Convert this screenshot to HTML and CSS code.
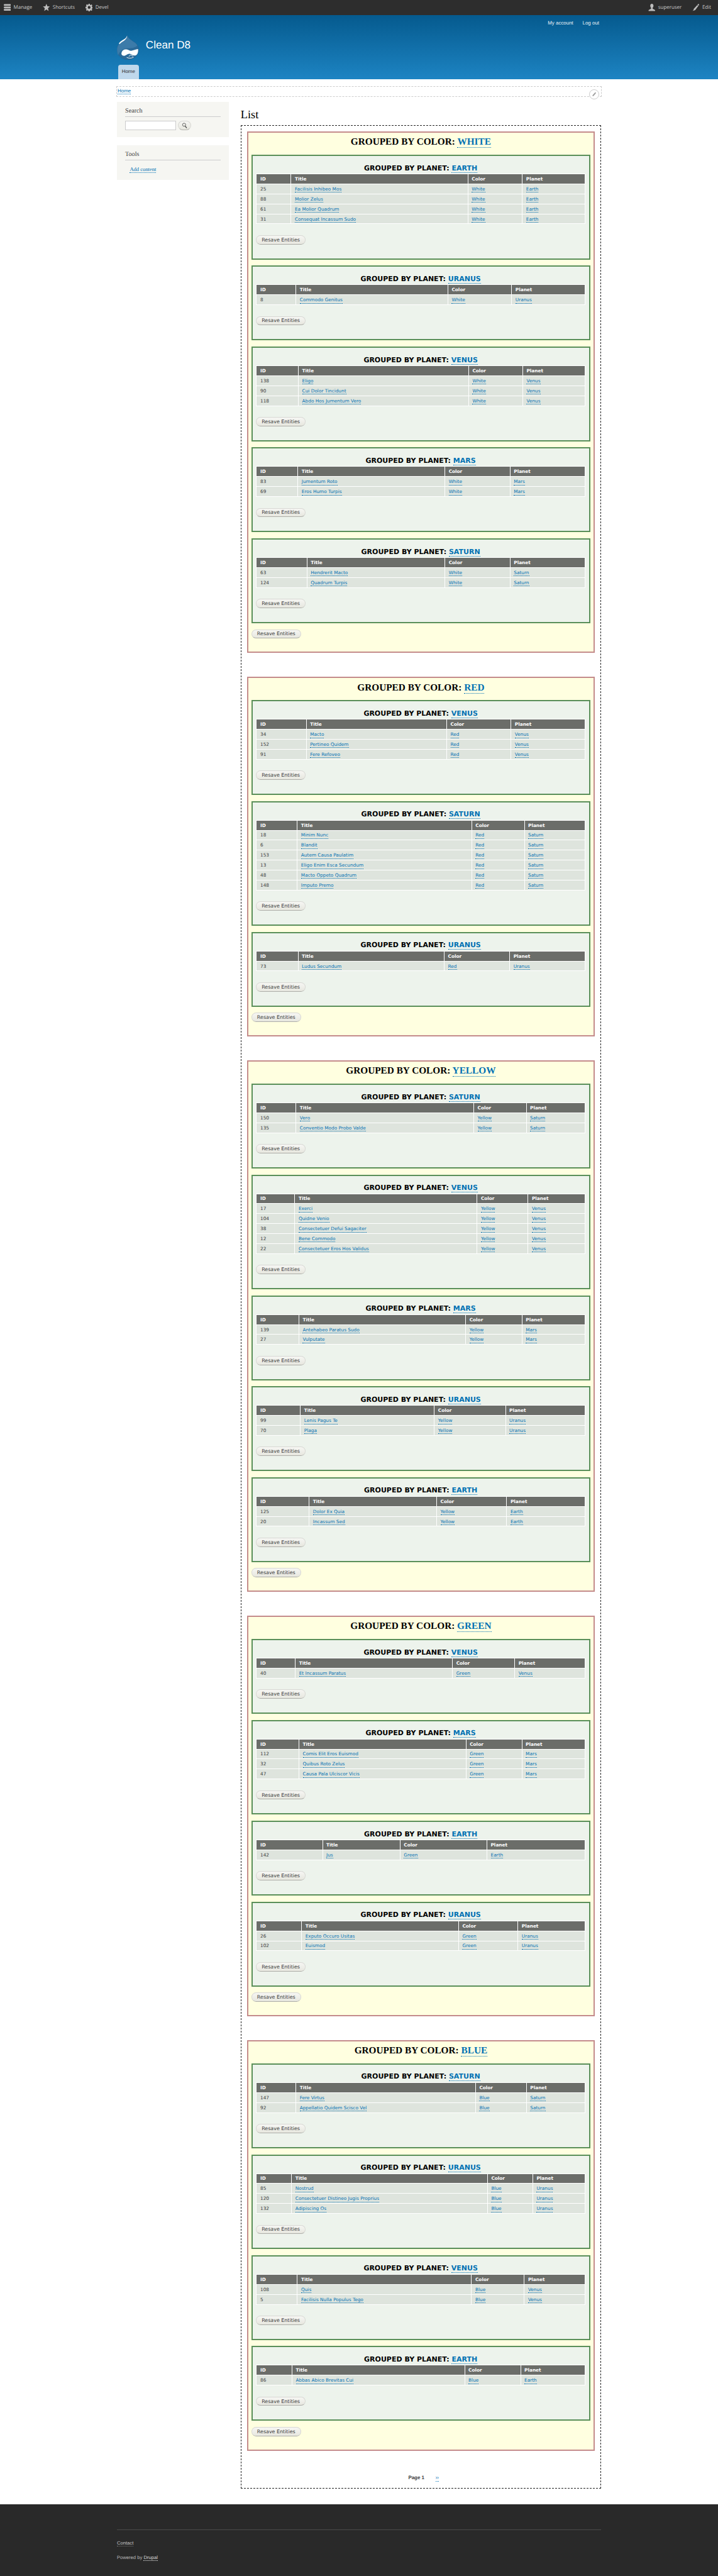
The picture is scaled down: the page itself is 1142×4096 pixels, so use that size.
FILE: index.html
```html
<!DOCTYPE html>
<html lang="en">
<head>
<meta charset="utf-8">
<title>List | Clean D8</title>
<link rel="stylesheet" href="styles.css">
</head>
<body>
<nav class="toolbar">
  <div class="tb-group">
    <a class="tb-item" href="#"><svg class="tb-icon" viewBox="0 0 20 20"><rect x="0" y="1" width="20" height="4.6" rx="2.2"/><rect x="0" y="7.7" width="20" height="4.6" rx="2.2"/><rect x="0" y="14.4" width="20" height="4.6" rx="2.2"/></svg>Manage</a>
    <a class="tb-item" href="#"><svg class="tb-icon" viewBox="0 0 20 20"><path d="M10 0l2.7 6.8 6.8.5-5.2 4.7 1.7 8L10 15.700l-6 4.300 1.700-8L.5 7.300l6.800-.5z"/></svg>Shortcuts</a>
    <a class="tb-item" href="#"><svg class="tb-icon" viewBox="0 0 20 20"><path fill-rule="evenodd" d="M8.200 0h3.600l.5 2.900 1.600.7 2.400-1.700 2.500 2.500-1.700 2.400.7 1.600 2.900.5v3.600l-2.900.5-.7 1.600 1.700 2.400-2.500 2.500-2.400-1.700-1.600.7-.5 2.900H8.200l-.5-2.900-1.600-.7-2.400 1.700-2.500-2.500 1.700-2.400-.7-1.600-2.900-.5V8.400l2.900-.5.7-1.600L1.400 3.900l2.500-2.500 2.400 1.700 1.600-.7zM10 6.200a3.800 3.800 0 1 0 0 7.600 3.800 3.800 0 0 0 0-7.600z"/></svg>Devel</a>
  </div>
  <div class="tb-group">
    <a class="tb-item" href="#"><svg class="tb-icon" viewBox="0 0 20 20"><path d="M10 0c2.900 0 4.400 2.300 4.400 5.200 0 2.500-1 4.600-2.200 5.800-.4 1.500.1 3 2 3.800 2 .8 3.800 1.500 4.800 2.700V20H1v-2.500c1-1.200 2.800-1.900 4.800-2.700 1.900-.8 2.400-2.300 2-3.800C6.600 9.800 5.600 7.700 5.600 5.200 5.600 2.300 7.100 0 10 0z"/></svg>superuser</a>
    <a class="tb-item" href="#"><svg class="tb-icon" viewBox="0 0 20 20"><path d="M16.800 0l2.400 1.900-1.700 3.100-3.200-2zM13.600 3.700l3.300 2L8.200 17.200l-4.600 1.600.4-4.700zM2.800 17.200l1.300.8L1 20z"/></svg>Edit</a>
  </div>
</nav>

<header class="site-header">
  <div class="container">
    <ul class="secondary-menu">
      <li><a href="#">My account</a></li>
      <li><a href="#">Log out</a></li>
    </ul>
    <div class="branding">
      <svg class="logo" viewBox="0 0 57 64">
        <path fill="#2b6a99" stroke="#2a5f8a" stroke-width=".8" d="M27 .5c1 7 10 12 19 18 7 5 10.500 12 10.500 19.500C56.500 52.500 44 63.500 28.500 63.500S.5 52 .5 37.500C.5 25 9 18.500 17 13c5-3.500 9-7 10-12.500z"/>
        <path fill="#3c7ba9" d="M27 1c1 7 10 12 19 18 3 2.200 5.500 5 7.200 8C40 38 28 30 14 38c-6 3.500-9 9-11 14-1.600-4-2.500-9-2.500-14.500C.5 25 9 18.500 17 13c5-3.500 9-7 10-12z"/>
        <path fill="#fff" d="M26.500 1c-.2 5-2 9.500-8 13.500-3.500 2.300-6.500 4.200-11 7.800C5 24 4 21 8 17.500 15 12 24 10 26.500 1z"/>
        <path fill="#fff" d="M12 47c0-7 7-11.500 13.500-10 4.500 1 8 4.500 12 3.500 6-1.500 12-4 17.500-4.500 1 8.500-1.500 17-9.500 17-6 0-8.500-4.500-13.500-4.500-5 0-8 5-13 5-4.500 0-7.500-2.500-7.500-6.500z"/>
        <path fill="none" stroke="#fff" stroke-width="1.500" stroke-linecap="round" d="M26 58c5 2.500 11 2.500 17-.5M31.500 55c1-4 8-5 9.500 0"/>
      </svg>
      <a class="site-name" href="#">Clean D8</a>
    </div>
    <nav class="main-menu"><a class="tab" href="#">Home</a></nav>
  </div>
</header>

<div class="container">
  <div class="breadcrumb">
    <a href="#">Home</a>
    <button class="contextual" type="button" aria-label="Edit"><svg viewBox="0 0 20 20"><path d="M14.500 2l3.500 2.500L8 16.500 3.800 18l.5-4.500z"/></svg></button>
  </div>

  <div class="layout">
    <aside class="sidebar">
      <section class="block">
        <h2 class="block-title">Search</h2>
        <form class="search-form">
          <input class="search-input" type="search">
          <button class="search-btn" type="button" aria-label="Search"><svg viewBox="0 0 20 20"><circle cx="8" cy="7" r="5.200"/><path d="M11.500 11l5 7" stroke-width="2.600"/></svg></button>
        </form>
      </section>
      <section class="block">
        <h2 class="block-title">Tools</h2>
        <div class="tools-link"><a href="#">Add content</a></div>
      </section>
    </aside>

    <main class="main">
      <h1 class="page-title">List</h1>
      <div class="view">

        <section class="color-group">
          <h2 class="color-title">Grouped by color: <a href="#">White</a></h2>
          <section class="planet-group">
            <h3 class="planet-title">Grouped by planet: <a href="#">Earth</a></h3>
            <table class="entities">
              <thead><tr><th>ID</th><th>Title</th><th>Color</th><th>Planet</th></tr></thead>
              <tbody>
                <tr><td>25</td><td><a href="#">Facilisis Inhibeo Mos</a></td><td><a href="#">White</a></td><td><a href="#">Earth</a></td></tr>
                <tr><td>88</td><td><a href="#">Molior Zelus</a></td><td><a href="#">White</a></td><td><a href="#">Earth</a></td></tr>
                <tr><td>61</td><td><a href="#">Ea Molior Quadrum</a></td><td><a href="#">White</a></td><td><a href="#">Earth</a></td></tr>
                <tr><td>31</td><td><a href="#">Consequat Incassum Sudo</a></td><td><a href="#">White</a></td><td><a href="#">Earth</a></td></tr>
              </tbody>
            </table>
            <button class="btn" type="button">Resave Entities</button>
          </section>
          <section class="planet-group">
            <h3 class="planet-title">Grouped by planet: <a href="#">Uranus</a></h3>
            <table class="entities">
              <thead><tr><th>ID</th><th>Title</th><th>Color</th><th>Planet</th></tr></thead>
              <tbody>
                <tr><td>8</td><td><a href="#">Commodo Genitus</a></td><td><a href="#">White</a></td><td><a href="#">Uranus</a></td></tr>
              </tbody>
            </table>
            <button class="btn" type="button">Resave Entities</button>
          </section>
          <section class="planet-group">
            <h3 class="planet-title">Grouped by planet: <a href="#">Venus</a></h3>
            <table class="entities">
              <thead><tr><th>ID</th><th>Title</th><th>Color</th><th>Planet</th></tr></thead>
              <tbody>
                <tr><td>138</td><td><a href="#">Eligo</a></td><td><a href="#">White</a></td><td><a href="#">Venus</a></td></tr>
                <tr><td>90</td><td><a href="#">Cui Dolor Tincidunt</a></td><td><a href="#">White</a></td><td><a href="#">Venus</a></td></tr>
                <tr><td>118</td><td><a href="#">Abdo Hos Jumentum Vero</a></td><td><a href="#">White</a></td><td><a href="#">Venus</a></td></tr>
              </tbody>
            </table>
            <button class="btn" type="button">Resave Entities</button>
          </section>
          <section class="planet-group">
            <h3 class="planet-title">Grouped by planet: <a href="#">Mars</a></h3>
            <table class="entities">
              <thead><tr><th>ID</th><th>Title</th><th>Color</th><th>Planet</th></tr></thead>
              <tbody>
                <tr><td>83</td><td><a href="#">Jumentum Roto</a></td><td><a href="#">White</a></td><td><a href="#">Mars</a></td></tr>
                <tr><td>69</td><td><a href="#">Eros Humo Turpis</a></td><td><a href="#">White</a></td><td><a href="#">Mars</a></td></tr>
              </tbody>
            </table>
            <button class="btn" type="button">Resave Entities</button>
          </section>
          <section class="planet-group">
            <h3 class="planet-title">Grouped by planet: <a href="#">Saturn</a></h3>
            <table class="entities">
              <thead><tr><th>ID</th><th>Title</th><th>Color</th><th>Planet</th></tr></thead>
              <tbody>
                <tr><td>63</td><td><a href="#">Hendrerit Macto</a></td><td><a href="#">White</a></td><td><a href="#">Saturn</a></td></tr>
                <tr><td>124</td><td><a href="#">Quadrum Turpis</a></td><td><a href="#">White</a></td><td><a href="#">Saturn</a></td></tr>
              </tbody>
            </table>
            <button class="btn" type="button">Resave Entities</button>
          </section>
          <button class="btn btn-group" type="button">Resave Entities</button>
        </section>

        <section class="color-group">
          <h2 class="color-title">Grouped by color: <a href="#">Red</a></h2>
          <section class="planet-group">
            <h3 class="planet-title">Grouped by planet: <a href="#">Venus</a></h3>
            <table class="entities">
              <thead><tr><th>ID</th><th>Title</th><th>Color</th><th>Planet</th></tr></thead>
              <tbody>
                <tr><td>34</td><td><a href="#">Macto</a></td><td><a href="#">Red</a></td><td><a href="#">Venus</a></td></tr>
                <tr><td>152</td><td><a href="#">Pertineo Quidem</a></td><td><a href="#">Red</a></td><td><a href="#">Venus</a></td></tr>
                <tr><td>91</td><td><a href="#">Fere Refoveo</a></td><td><a href="#">Red</a></td><td><a href="#">Venus</a></td></tr>
              </tbody>
            </table>
            <button class="btn" type="button">Resave Entities</button>
          </section>
          <section class="planet-group">
            <h3 class="planet-title">Grouped by planet: <a href="#">Saturn</a></h3>
            <table class="entities">
              <thead><tr><th>ID</th><th>Title</th><th>Color</th><th>Planet</th></tr></thead>
              <tbody>
                <tr><td>18</td><td><a href="#">Minim Nunc</a></td><td><a href="#">Red</a></td><td><a href="#">Saturn</a></td></tr>
                <tr><td>6</td><td><a href="#">Blandit</a></td><td><a href="#">Red</a></td><td><a href="#">Saturn</a></td></tr>
                <tr><td>153</td><td><a href="#">Autem Causa Paulatim</a></td><td><a href="#">Red</a></td><td><a href="#">Saturn</a></td></tr>
                <tr><td>13</td><td><a href="#">Eligo Enim Esca Secundum</a></td><td><a href="#">Red</a></td><td><a href="#">Saturn</a></td></tr>
                <tr><td>48</td><td><a href="#">Macto Oppeto Quadrum</a></td><td><a href="#">Red</a></td><td><a href="#">Saturn</a></td></tr>
                <tr><td>148</td><td><a href="#">Imputo Premo</a></td><td><a href="#">Red</a></td><td><a href="#">Saturn</a></td></tr>
              </tbody>
            </table>
            <button class="btn" type="button">Resave Entities</button>
          </section>
          <section class="planet-group">
            <h3 class="planet-title">Grouped by planet: <a href="#">Uranus</a></h3>
            <table class="entities">
              <thead><tr><th>ID</th><th>Title</th><th>Color</th><th>Planet</th></tr></thead>
              <tbody>
                <tr><td>73</td><td><a href="#">Ludus Secundum</a></td><td><a href="#">Red</a></td><td><a href="#">Uranus</a></td></tr>
              </tbody>
            </table>
            <button class="btn" type="button">Resave Entities</button>
          </section>
          <button class="btn btn-group" type="button">Resave Entities</button>
        </section>

        <section class="color-group">
          <h2 class="color-title">Grouped by color: <a href="#">Yellow</a></h2>
          <section class="planet-group">
            <h3 class="planet-title">Grouped by planet: <a href="#">Saturn</a></h3>
            <table class="entities">
              <thead><tr><th>ID</th><th>Title</th><th>Color</th><th>Planet</th></tr></thead>
              <tbody>
                <tr><td>150</td><td><a href="#">Vero</a></td><td><a href="#">Yellow</a></td><td><a href="#">Saturn</a></td></tr>
                <tr><td>135</td><td><a href="#">Conventio Modo Probo Valde</a></td><td><a href="#">Yellow</a></td><td><a href="#">Saturn</a></td></tr>
              </tbody>
            </table>
            <button class="btn" type="button">Resave Entities</button>
          </section>
          <section class="planet-group">
            <h3 class="planet-title">Grouped by planet: <a href="#">Venus</a></h3>
            <table class="entities">
              <thead><tr><th>ID</th><th>Title</th><th>Color</th><th>Planet</th></tr></thead>
              <tbody>
                <tr><td>17</td><td><a href="#">Exerci</a></td><td><a href="#">Yellow</a></td><td><a href="#">Venus</a></td></tr>
                <tr><td>104</td><td><a href="#">Quidne Venio</a></td><td><a href="#">Yellow</a></td><td><a href="#">Venus</a></td></tr>
                <tr><td>38</td><td><a href="#">Consectetuer Defui Sagaciter</a></td><td><a href="#">Yellow</a></td><td><a href="#">Venus</a></td></tr>
                <tr><td>12</td><td><a href="#">Bene Commodo</a></td><td><a href="#">Yellow</a></td><td><a href="#">Venus</a></td></tr>
                <tr><td>22</td><td><a href="#">Consectetuer Eros Hos Validus</a></td><td><a href="#">Yellow</a></td><td><a href="#">Venus</a></td></tr>
              </tbody>
            </table>
            <button class="btn" type="button">Resave Entities</button>
          </section>
          <section class="planet-group">
            <h3 class="planet-title">Grouped by planet: <a href="#">Mars</a></h3>
            <table class="entities">
              <thead><tr><th>ID</th><th>Title</th><th>Color</th><th>Planet</th></tr></thead>
              <tbody>
                <tr><td>139</td><td><a href="#">Antehabeo Paratus Sudo</a></td><td><a href="#">Yellow</a></td><td><a href="#">Mars</a></td></tr>
                <tr><td>27</td><td><a href="#">Vulputate</a></td><td><a href="#">Yellow</a></td><td><a href="#">Mars</a></td></tr>
              </tbody>
            </table>
            <button class="btn" type="button">Resave Entities</button>
          </section>
          <section class="planet-group">
            <h3 class="planet-title">Grouped by planet: <a href="#">Uranus</a></h3>
            <table class="entities">
              <thead><tr><th>ID</th><th>Title</th><th>Color</th><th>Planet</th></tr></thead>
              <tbody>
                <tr><td>99</td><td><a href="#">Lenis Pagus Te</a></td><td><a href="#">Yellow</a></td><td><a href="#">Uranus</a></td></tr>
                <tr><td>70</td><td><a href="#">Plaga</a></td><td><a href="#">Yellow</a></td><td><a href="#">Uranus</a></td></tr>
              </tbody>
            </table>
            <button class="btn" type="button">Resave Entities</button>
          </section>
          <section class="planet-group">
            <h3 class="planet-title">Grouped by planet: <a href="#">Earth</a></h3>
            <table class="entities">
              <thead><tr><th>ID</th><th>Title</th><th>Color</th><th>Planet</th></tr></thead>
              <tbody>
                <tr><td>125</td><td><a href="#">Dolor Ex Quia</a></td><td><a href="#">Yellow</a></td><td><a href="#">Earth</a></td></tr>
                <tr><td>20</td><td><a href="#">Incassum Sed</a></td><td><a href="#">Yellow</a></td><td><a href="#">Earth</a></td></tr>
              </tbody>
            </table>
            <button class="btn" type="button">Resave Entities</button>
          </section>
          <button class="btn btn-group" type="button">Resave Entities</button>
        </section>

        <section class="color-group">
          <h2 class="color-title">Grouped by color: <a href="#">Green</a></h2>
          <section class="planet-group">
            <h3 class="planet-title">Grouped by planet: <a href="#">Venus</a></h3>
            <table class="entities">
              <thead><tr><th>ID</th><th>Title</th><th>Color</th><th>Planet</th></tr></thead>
              <tbody>
                <tr><td>40</td><td><a href="#">Et Incassum Paratus</a></td><td><a href="#">Green</a></td><td><a href="#">Venus</a></td></tr>
              </tbody>
            </table>
            <button class="btn" type="button">Resave Entities</button>
          </section>
          <section class="planet-group">
            <h3 class="planet-title">Grouped by planet: <a href="#">Mars</a></h3>
            <table class="entities">
              <thead><tr><th>ID</th><th>Title</th><th>Color</th><th>Planet</th></tr></thead>
              <tbody>
                <tr><td>112</td><td><a href="#">Comis Elit Eros Euismod</a></td><td><a href="#">Green</a></td><td><a href="#">Mars</a></td></tr>
                <tr><td>32</td><td><a href="#">Quibus Roto Zelus</a></td><td><a href="#">Green</a></td><td><a href="#">Mars</a></td></tr>
                <tr><td>47</td><td><a href="#">Causa Pala Ulciscor Vicis</a></td><td><a href="#">Green</a></td><td><a href="#">Mars</a></td></tr>
              </tbody>
            </table>
            <button class="btn" type="button">Resave Entities</button>
          </section>
          <section class="planet-group">
            <h3 class="planet-title">Grouped by planet: <a href="#">Earth</a></h3>
            <table class="entities">
              <thead><tr><th>ID</th><th>Title</th><th>Color</th><th>Planet</th></tr></thead>
              <tbody>
                <tr><td>142</td><td><a href="#">Jus</a></td><td><a href="#">Green</a></td><td><a href="#">Earth</a></td></tr>
              </tbody>
            </table>
            <button class="btn" type="button">Resave Entities</button>
          </section>
          <section class="planet-group">
            <h3 class="planet-title">Grouped by planet: <a href="#">Uranus</a></h3>
            <table class="entities">
              <thead><tr><th>ID</th><th>Title</th><th>Color</th><th>Planet</th></tr></thead>
              <tbody>
                <tr><td>26</td><td><a href="#">Exputo Occuro Usitas</a></td><td><a href="#">Green</a></td><td><a href="#">Uranus</a></td></tr>
                <tr><td>102</td><td><a href="#">Euismod</a></td><td><a href="#">Green</a></td><td><a href="#">Uranus</a></td></tr>
              </tbody>
            </table>
            <button class="btn" type="button">Resave Entities</button>
          </section>
          <button class="btn btn-group" type="button">Resave Entities</button>
        </section>

        <section class="color-group">
          <h2 class="color-title">Grouped by color: <a href="#">Blue</a></h2>
          <section class="planet-group">
            <h3 class="planet-title">Grouped by planet: <a href="#">Saturn</a></h3>
            <table class="entities">
              <thead><tr><th>ID</th><th>Title</th><th>Color</th><th>Planet</th></tr></thead>
              <tbody>
                <tr><td>147</td><td><a href="#">Fere Virtus</a></td><td><a href="#">Blue</a></td><td><a href="#">Saturn</a></td></tr>
                <tr><td>92</td><td><a href="#">Appellatio Quidem Scisco Vel</a></td><td><a href="#">Blue</a></td><td><a href="#">Saturn</a></td></tr>
              </tbody>
            </table>
            <button class="btn" type="button">Resave Entities</button>
          </section>
          <section class="planet-group">
            <h3 class="planet-title">Grouped by planet: <a href="#">Uranus</a></h3>
            <table class="entities">
              <thead><tr><th>ID</th><th>Title</th><th>Color</th><th>Planet</th></tr></thead>
              <tbody>
                <tr><td>85</td><td><a href="#">Nostrud</a></td><td><a href="#">Blue</a></td><td><a href="#">Uranus</a></td></tr>
                <tr><td>120</td><td><a href="#">Consectetuer Distineo Jugis Proprius</a></td><td><a href="#">Blue</a></td><td><a href="#">Uranus</a></td></tr>
                <tr><td>132</td><td><a href="#">Adipiscing Os</a></td><td><a href="#">Blue</a></td><td><a href="#">Uranus</a></td></tr>
              </tbody>
            </table>
            <button class="btn" type="button">Resave Entities</button>
          </section>
          <section class="planet-group">
            <h3 class="planet-title">Grouped by planet: <a href="#">Venus</a></h3>
            <table class="entities">
              <thead><tr><th>ID</th><th>Title</th><th>Color</th><th>Planet</th></tr></thead>
              <tbody>
                <tr><td>108</td><td><a href="#">Quis</a></td><td><a href="#">Blue</a></td><td><a href="#">Venus</a></td></tr>
                <tr><td>5</td><td><a href="#">Facilisis Nulla Populus Tego</a></td><td><a href="#">Blue</a></td><td><a href="#">Venus</a></td></tr>
              </tbody>
            </table>
            <button class="btn" type="button">Resave Entities</button>
          </section>
          <section class="planet-group">
            <h3 class="planet-title">Grouped by planet: <a href="#">Earth</a></h3>
            <table class="entities">
              <thead><tr><th>ID</th><th>Title</th><th>Color</th><th>Planet</th></tr></thead>
              <tbody>
                <tr><td>86</td><td><a href="#">Abbas Abico Brevitas Cui</a></td><td><a href="#">Blue</a></td><td><a href="#">Earth</a></td></tr>
              </tbody>
            </table>
            <button class="btn" type="button">Resave Entities</button>
          </section>
          <button class="btn btn-group" type="button">Resave Entities</button>
        </section>

        <nav class="pager">
          <span class="pager-current">Page 1</span>
          <a class="pager-next" href="#">››</a>
        </nav>
      </div>
    </main>
  </div>
</div>

<footer class="site-footer">
  <div class="container">
    <div class="footer-inner">
      <p class="footer-menu"><a href="#">Contact</a></p>
      <p class="footer-powered">Powered by <a href="#">Drupal</a></p>
    </div>
  </div>
</footer>
</body>
</html>
```

FILE: styles.css
```css
* { box-sizing: border-box; }

html { background: #292929; }

body {
  margin: 0;
  background: #fff;
  color: #3b3b3b;
  font-family: "Liberation Sans", Arial, sans-serif;
  font-size: 7.94px;
  text-rendering: geometricPrecision;
}

a { color: #0071b3; text-decoration: none; }

.container { width: 770px; margin: 0 auto; }

/* Admin toolbar */
.toolbar {
  display: flex;
  justify-content: space-between;
  height: 23.83px;
  padding: 0 11px 0 5.5px;
  background: #2d2d2d;
  font-family: "Open Sans", sans-serif;
  font-size: 7.94px;
}
.tb-group { display: flex; gap: 16.5px; }
.tb-item { display: flex; align-items: center; gap: 4.5px; color: #c8c8c8; }
.tb-icon { width: 11.6px; height: 11.6px; fill: #bdbdbd; }

/* Site header */
.site-header {
  height: 102px;
  background: linear-gradient(#055a8e, #1d84c3);
}
.secondary-menu {
  display: flex;
  justify-content: flex-end;
  gap: 14.7px;
  margin: 0;
  padding: 6.7px 3px 0 0;
  list-style: none;
  line-height: 11px;
}
.secondary-menu a { color: #e8f1f7; }
.branding { display: flex; gap: 11px; margin-top: 14px; height: 39.1px; }
.logo { width: 34.8px; height: 39.1px; }
.site-name {
  padding-top: 6.7px;
  color: #fff;
  font-size: 17.1px;
  line-height: 19.6px;
}
.main-menu { display: flex; margin: 8.55px 0 0 1.5px; }
.tab {
  display: block;
  width: 33.6px;
  height: 22.6px;
  border-radius: 3.7px 3.7px 0 0;
  background: #bfd8ec;
  color: #333;
  line-height: 22.6px;
  text-align: center;
}

/* Breadcrumb */
.breadcrumb {
  position: relative;
  height: 17.1px;
  margin: 11px -1px 0;
  padding-left: 1px;
  border: 1px dashed #ccc;
  line-height: 13.4px;
}
.breadcrumb a { border-bottom: 1px dotted #0071b3; }
.contextual {
  position: absolute;
  top: 4.3px;
  right: 3px;
  width: 15.9px;
  height: 15.9px;
  padding: 3px;
  border: 1px solid #ccc;
  border-radius: 50%;
  background: #fff;
}
.contextual svg { display: block; fill: #9a9a9a; }

/* Two columns */
.layout { display: flex; gap: 19px; margin-top: 7.9px; }
.sidebar { flex: none; width: 177.8px; padding-left: .3px; }
.main { flex: 1; min-width: 0; }

.block {
  margin-bottom: 12.2px;
  padding: 7.3px 12.8px 11px;
  background: #f6f6f2;
}
.block-title {
  margin: 0;
  border-bottom: 1px solid #ccc;
  color: #3b3b3b;
  font-family: "Liberation Serif", serif;
  font-size: 10.1px;
  font-weight: 400;
  line-height: 15.9px;
}
.search-form { display: flex; gap: 3px; margin: 0; padding-top: 5.5px; }
.search-input {
  width: 81.3px;
  height: 15.9px;
  padding: 0;
  border: 1px solid #ccc;
  background: #fff;
}
.search-btn {
  width: 20.2px;
  height: 15.9px;
  padding: 1.8px 4.3px;
  border: 1px solid #d8d8d4;
  border-bottom-color: #b5b5b0;
  border-radius: 8px;
  background: linear-gradient(#f6f6f3, #e7e7df);
}
.search-btn svg { display: block; fill: none; stroke: #3b3b3b; stroke-width: 1.6; }
.tools-link {
  padding: 7.9px 0 0 7.3px;
  font-family: "Liberation Serif", serif;
  font-size: 8.55px;
  line-height: 12.2px;
}
.tools-link a { border-bottom: 1px dotted #0071b3; }

/* View */
.page-title {
  margin: 0;
  padding-top: 9.2px;
  color: #000;
  font-family: "Liberation Serif", serif;
  font-size: 18.3px;
  font-weight: 400;
  line-height: 22px;
}
.view {
  margin-top: 6.1px;
  padding: 8.8px 8.8px 0;
  border: 1px dashed #222;
}
.color-group {
  margin-bottom: 37.6px;
  padding: 3.5px 5.3px 21.2px;
  border: 2px solid #c48b8b;
  background: #ffffe0;
}
.color-group:last-of-type { margin-bottom: 0; }
.color-title {
  margin: 0 0 7.3px;
  color: #000;
  font-family: "Liberation Serif", serif;
  font-size: 15.3px;
  font-weight: 700;
  line-height: 24.4px;
  text-align: center;
  text-transform: uppercase;
}
.color-title a { border-bottom: 1px dotted #0071b3; }

.planet-group {
  margin-bottom: 9.78px;
  padding: 11.5px 6.2px 22px 5.6px;
  border: 2px solid #5a8f59;
  background: #edf3ec;
}
.planet-title {
  margin: 0;
  color: #000;
  font-family: "DejaVu Sans", sans-serif;
  font-size: 11px;
  font-weight: 700;
  line-height: 16.5px;
  text-align: center;
  text-transform: uppercase;
}
.planet-title a { border-bottom: 1px dotted #0071b3; }

.entities {
  width: 100%;
  border-collapse: collapse;
  font-family: "DejaVu Sans", sans-serif;
  font-size: 7.33px;
}
.entities th,
.entities td {
  height: 15.886px;
  padding: 0 5.5px;
  border: 1px solid #fff;
  text-align: left;
}
.entities th { background: #6b6d69; color: #fff; font-weight: 700; }
.entities td { background: #dee4dd; color: #3b3b3b; }
.entities a { padding-bottom: .5px; border-bottom: 1px dotted #0071b3; }

.btn {
  display: block;
  width: 78.2px;
  height: 14.66px;
  margin-top: 17.5px;
  padding: 0;
  border: 1px solid #d8d8d4;
  border-bottom-color: #adada8;
  border-radius: 7.3px;
  background: linear-gradient(#f6f6f3, #e7e7df);
  color: #3a3a3a;
  font-family: "DejaVu Sans", sans-serif;
  font-size: 7.94px;
}
.btn-group { width: 78.8px; margin-top: 7.32px; }

/* Pager */
.pager {
  display: flex;
  justify-content: center;
  gap: 17.7px;
  margin-top: 37.3px;
  padding: 0 0 9.8px 8.6px;
  line-height: 12.2px;
}
.pager-current { font-weight: 700; }
.pager-next { border-bottom: 1px dotted #0071b3; line-height: 11px; }

/* Footer */
.site-footer {
  height: 115px;
  margin-top: 25px;
  padding-top: 39.7px;
  background: #292929;
}
.footer-inner {
  border-top: 1px solid #4a4a4a;
  color: #b8b8b8;
  font-size: 7.64px;
  line-height: 11px;
}
.footer-menu { margin: 0; padding-top: 15.3px; }
.footer-menu a { border-bottom: 1px dotted #777; color: #c4c4c4; }
.footer-powered { margin: 0; padding-top: 11.6px; }
.footer-powered a { border-bottom: 1px dotted #eee; color: #d8d8d8; }
```
